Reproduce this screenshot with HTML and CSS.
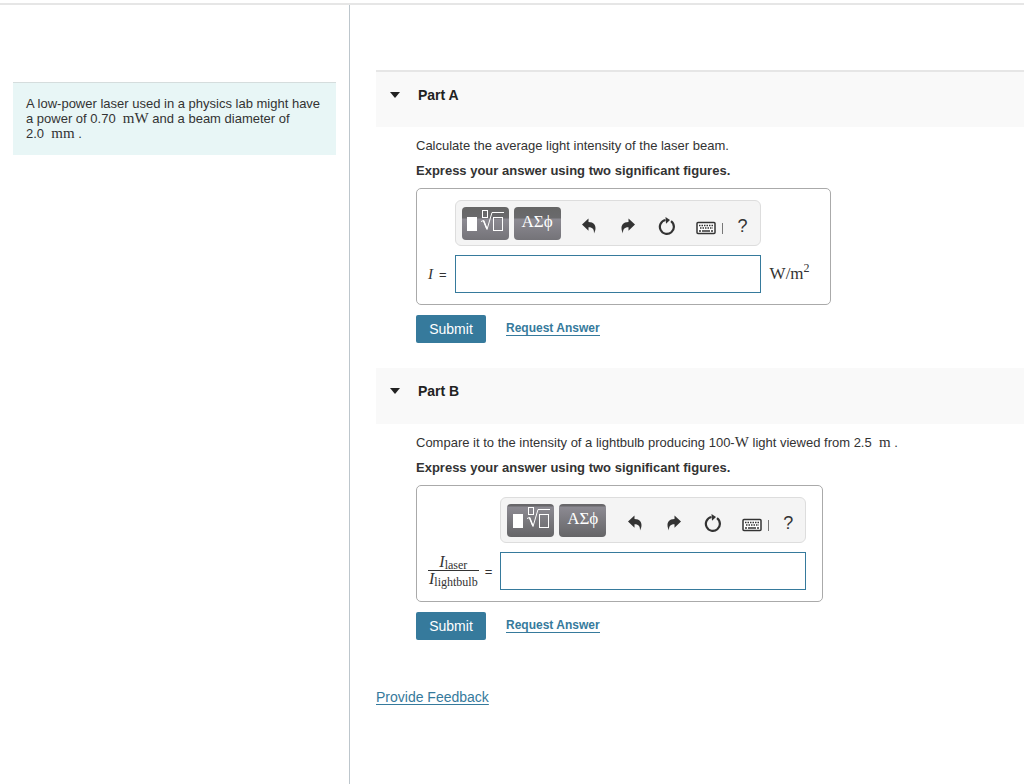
FILE: index.html
```html
<!DOCTYPE html>
<html lang="en">
<head>
<meta charset="utf-8">
<title>Laser intensity problem</title>
<link rel="stylesheet" href="styles.css">
</head>
<body>
<svg class="sprite" aria-hidden="true">
  <symbol id="template" viewBox="0 0 38 24">
    <rect x="1" y="8" width="10" height="14" fill="#fff"/>
    <g fill="none" stroke="#fff" stroke-width="1"><rect x="16.500" y="1.500" width="5" height="7"/><path d="M15 12.500l2.500-1 3.500 9 5-17h12"/><rect x="27.500" y="8.500" width="9" height="13"/></g>
    <path d="M17.500 11.500l3.300 8" stroke="#fff" stroke-width="1.500"/>
  </symbol>
  <symbol id="undo" viewBox="0 0 16 16"><path d="M1 6.500L7.500.5v3.500c5.500 0 7 3.500 7 6 0 2-.6 3.600-1.500 5.500.2-4-1-6.300-5.500-6.300v3.500z"/></symbol>
  <symbol id="redo" viewBox="0 0 16 16"><path d="M15 6.500L8.500.5v3.500c-5.500 0-7 3.500-7 6 0 2 .6 3.600 1.500 5.500-.2-4 1-6.300 5.500-6.300v3.500z"/></symbol>
  <symbol id="reset" viewBox="0 0 18 18"><path d="M13 4.200a7 7 0 1 1-5.500-1.200" fill="none" stroke="currentColor" stroke-width="2.200"/><path d="M7.500 0l4.500 3-4 3.800z"/></symbol>
  <symbol id="keyboard" viewBox="0 0 28 14">
    <rect x="1" y="1.500" width="18" height="11" rx="1" fill="#fff" stroke="currentColor" stroke-width="1.500"/>
    <path d="M3 4.500h14M4 7h13" fill="none" stroke="currentColor" stroke-width="1.500" stroke-dasharray="1.500 1"/>
    <path d="M3 10h2M6 10h8M15 10h2" stroke="currentColor" stroke-width="1.500"/>
    <path d="M26.500 2v11" stroke="#777"/>
  </symbol>
</svg>
<div class="page">
  <aside class="sidebar">
    <p class="intro">A low-power laser used in a physics lab might have a power of 0.70&nbsp;&nbsp;<span class="math">mW</span> and a beam diameter of 2.0&nbsp;&nbsp;<span class="math">mm</span>&nbsp;.</p>
  </aside>
  <main class="main">
    <section class="part">
      <h2 class="part-head part-first"><button class="toggle" type="button"><span class="caret"></span>Part A</button></h2>
      <form class="part-body">
        <p class="question">Calculate the average light intensity of the laser beam.</p>
        <p class="question strong">Express your answer using two significant figures.</p>
        <div class="answer">
          <div class="toolbar">
            <button class="key key-split" type="button" aria-label="Templates"><svg class="template"><use href="#template"/></svg></button>
            <button class="key key-split" type="button">ΑΣϕ</button>
            <button class="tool tool-first" type="button" aria-label="Undo"><svg class="arrow"><use href="#undo"/></svg></button>
            <button class="tool" type="button" aria-label="Redo"><svg class="arrow"><use href="#redo"/></svg></button>
            <button class="tool" type="button" aria-label="Reset"><svg class="reset"><use href="#reset"/></svg></button>
            <button class="tool tool-wide" type="button" aria-label="Keyboard shortcuts"><svg class="keyboard"><use href="#keyboard"/></svg></button>
            <button class="tool help" type="button">?</button>
          </div>
          <label class="name" for="a"><i class="math">I</i> =</label>
          <input class="value" id="a" type="text">
          <span class="unit">W/m<sup>2</sup></span>
        </div>
        <div class="actions"><button class="submit" type="button">Submit</button><a class="request" href="#">Request Answer</a></div>
      </form>
    </section>
    <section class="part">
      <h2 class="part-head"><button class="toggle" type="button"><span class="caret"></span>Part B</button></h2>
      <form class="part-body">
        <p class="question">Compare it to the intensity of a lightbulb producing 100-<span class="math">W</span> light viewed from 2.5 &nbsp;<span class="math">m</span> .</p>
        <p class="question strong">Express your answer using two significant figures.</p>
        <div class="answer">
          <div class="toolbar">
            <button class="key" type="button" aria-label="Templates"><svg class="template"><use href="#template"/></svg></button>
            <button class="key" type="button">ΑΣϕ</button>
            <button class="tool tool-first" type="button" aria-label="Undo"><svg class="arrow"><use href="#undo"/></svg></button>
            <button class="tool" type="button" aria-label="Redo"><svg class="arrow"><use href="#redo"/></svg></button>
            <button class="tool" type="button" aria-label="Reset"><svg class="reset"><use href="#reset"/></svg></button>
            <button class="tool tool-wide" type="button" aria-label="Keyboard shortcuts"><svg class="keyboard"><use href="#keyboard"/></svg></button>
            <button class="tool help" type="button">?</button>
          </div>
          <label class="name" for="b"><span class="fraction"><span class="term top"><i>I</i><sub>laser</sub></span><span class="term"><i>I</i><sub>lightbulb</sub></span></span> =</label>
          <input class="value" id="b" type="text">
        </div>
        <div class="actions"><button class="submit" type="button">Submit</button><a class="request" href="#">Request Answer</a></div>
      </form>
    </section>
    <a class="feedback" href="#">Provide Feedback</a>
  </main>
</div>
</body>
</html>
```
FILE: styles.css
```css
* { box-sizing: border-box; }
body { margin: 0; background: #fff; color: #333; font: 13px/15px "Liberation Sans", Arial, sans-serif; }
p, h2 { margin: 0; }
button { border: 0; padding: 0; background: none; color: inherit; font: inherit; }
.sprite { display: none; }
.page { display: flex; min-height: 100vh; padding-top: 3px; }
.page::before { content: ""; position: absolute; top: 3px; left: 0; right: 0; height: 2px; background: #e6e6e6; }
.sidebar { flex: 0 0 350px; padding: 79px 13px 0; border-right: 1px solid #bdc6cc; }
.intro { padding: 13px 12px 14px 13px; border-top: 1px solid #d5dddd; background: #e8f6f6; }
.math { font-family: "Liberation Serif", serif; font-size: 15px; line-height: 0; }
.main { flex: 1; padding: 67px 0 0 26px; }
.part { margin-bottom: 25px; }
.part-head { height: 56px; padding-top: 14px; background: #f9f9f9; font-size: 14px; line-height: 18px; }
.part-first { height: 57px; border-top: 2px solid #e6e6e6; }
.toggle { display: flex; align-items: center; gap: 18px; padding-left: 14px; color: #222; }
.caret { width: 10px; height: 6px; background: #222; clip-path: polygon(0 0, 100% 0, 50% 100%); }
.part-body { padding: 11px 0 0 40px; }
.question { height: 16px; margin-bottom: 9px; line-height: 16px; white-space: nowrap; }
.strong { font-weight: bold; }
.answer { display: grid; grid-template-columns: auto 306px auto; width: fit-content; row-gap: 9px; align-items: center; margin-bottom: 10px; padding: 11px 16px 11px 11px; border: 1px solid #aaa; border-radius: 5px; }
.toolbar { grid-column: 2; display: flex; align-items: center; height: 46px; padding-left: 6px; border: 1px solid #ddd; border-radius: 6px; background: #f4f4f4; }
.key { flex: none; width: 47px; height: 33px; margin-right: 5px; padding-bottom: 4px; border-radius: 4px; background: linear-gradient(#68676a 0, #68676a 2px, #8c8a92 3px, #656567); color: #fff; font: 17px/29px "Liberation Serif", serif; }
.key-split { background: linear-gradient(#666 0, #6a6a6c 11px, #8c8a92 12px, #747378); }
.template { display: block; width: 38px; height: 24px; margin: 0 auto; }
.tool { display: flex; flex: 0 0 39px; align-items: center; justify-content: center; padding-top: 6px; color: #333; fill: #333; }
.tool-first { margin-left: 4px; }
.arrow { width: 16px; height: 16px; }
.reset { width: 18px; height: 18px; }
.keyboard { flex: none; width: 28px; height: 14px; }
.tool-wide { padding-top: 10px; padding-left: 8px; }
.help { flex: 1; font-size: 18px; line-height: 18px; }
.name { grid-column: 1; display: flex; align-items: center; gap: 6px; padding-right: 8px; }
.value { grid-column: 2; width: 100%; height: 38px; padding: 0 8px; border: 1px solid #367a9c; outline: 0; font: inherit; }
.unit { padding: 0 4px 0 9px; font: 17px/20px "Liberation Serif", serif; }
.unit sup { font-size: 12px; line-height: 0; }
.fraction { font: 16px/16px "Liberation Serif", serif; }
.term { display: block; height: 17px; padding: 0 1px; text-align: center; }
.top { border-bottom: 1px solid #333; }
.term sub { font-size: 12px; line-height: 0; vertical-align: -2px; }
.actions { display: flex; align-items: center; gap: 20px; }
.submit { width: 70px; height: 28px; border-radius: 2px; background: #367a9c; color: #fff; font-size: 14px; }
a { color: #367a9c; }
.request { border-bottom: 1px solid; font-size: 12px; line-height: 13px; font-weight: bold; text-decoration: none; }
.feedback { display: inline-block; margin-top: 24px; font-size: 14px; line-height: 16px; text-underline-offset: 2px; }
```
